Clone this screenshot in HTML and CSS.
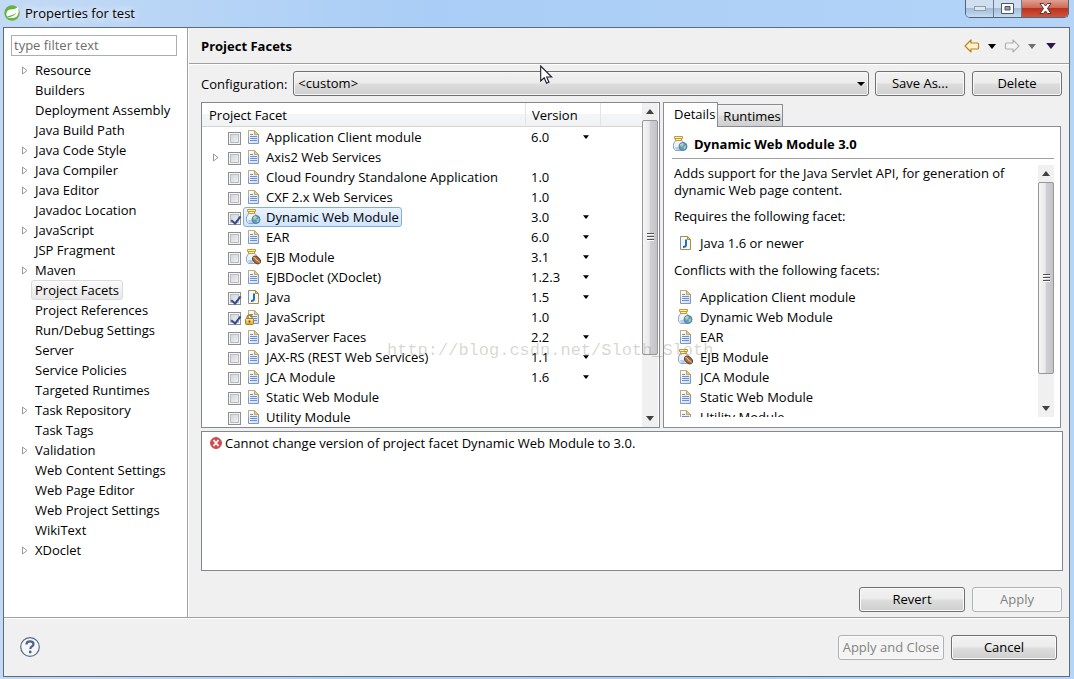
FILE: index.html
```html
<!DOCTYPE html>
<html lang="en">
<head>
<meta charset="utf-8">
<title>Properties for test</title>
<link rel="stylesheet" href="styles.css">
</head>
<body>
<svg class="sprites" aria-hidden="true">
  <defs>
    <linearGradient id="g-page" x1="0" y1="0" x2="1" y2="1"><stop offset="0" stop-color="#ffffff"/><stop offset="1" stop-color="#c9dcf3"/></linearGradient>
    <linearGradient id="g-lock" x1="0" y1="0" x2="0" y2="1"><stop offset="0" stop-color="#ffe9a0"/><stop offset="1" stop-color="#d9a52e"/></linearGradient>
  </defs>
  <symbol id="i-doc" viewBox="0 0 16 16">
    <path d="M3.500 1.500h6l4 4v9h-10z" fill="url(#g-page)" stroke="#8396c0"/>
    <path d="M3.500 8v-6.500h6" fill="none" stroke="#c0ae78"/>
    <path d="M9.500 1.500v4h4z" fill="#e3c984" stroke="#c9a85c"/>
    <path d="M5 5.500h3M5 7.500h7M5 9.500h7M5 11.500h7" stroke="#6f8fc8"/>
  </symbol>
  <symbol id="i-jar" viewBox="0 0 16 16">
    <path d="M3.500 4.500L1.500 8v4l2 2.500h7l2-2.500V8l-2.500-3.500z" fill="#eaf3fb" stroke="#8fa8ca"/>
    <path d="M3 11h5v3H4z" fill="#b5cfe9"/>
    <path d="M2.500.5h8v2h-8zM3.500 2.500h6v2h-6z" fill="#fff2b8" stroke="#c79a2c"/>
  </symbol>
  <symbol id="i-web" viewBox="0 0 16 16">
    <use href="#i-jar"/>
    <circle cx="11" cy="10.500" r="4" fill="#5b9bd2" stroke="#5b7ba8"/>
    <path d="M8 8.500l2.500-1.500 1.500 1-1 2-2 1zM11.500 10.500l2.500-1-.5 3-1.500 1z" fill="#a9d48b"/>
    <path d="M9 8.500l1-1" stroke="#fff"/>
  </symbol>
  <symbol id="i-ejb" viewBox="0 0 16 16">
    <use href="#i-jar"/>
    <ellipse cx="11.500" cy="11" rx="4.500" ry="3" transform="rotate(42 11.500 11)" fill="#a86f47" stroke="#6e3d20"/>
    <path d="M8.500 8.500c2.500 0 2 2.500 3.500 3s1.500.5 2.500 2" fill="none" stroke="#f0d3b4"/>
  </symbol>
  <symbol id="i-java" viewBox="0 0 16 16">
    <path d="M3.500 1.500h7l3 3v10h-10z" fill="#f3f8ff" stroke="#b08d3e"/>
    <path d="M3.500 14V1.500" stroke="#7993b8"/>
    <path d="M10.500 1.500v3h3z" fill="#e3c984" stroke="#b08d3e"/>
    <path d="M9 4.500v5.500c0 1.500-1 2-3 2" fill="none" stroke="#2d6ea6" stroke-width="2"/>
  </symbol>
  <symbol id="i-js" viewBox="0 0 16 16">
    <use href="#i-doc"/>
    <path d="M2 10V8.500a2.500 2.500 0 0 1 5 0V10" fill="none" stroke="#a87b1c" stroke-width="1.300"/>
    <rect x=".5" y="9.500" width="8" height="6" rx="1" fill="url(#g-lock)" stroke="#a87b1c"/>
    <path d="M4.500 11.500v2" stroke="#5c430d" stroke-width="1.500"/>
  </symbol>
  <symbol id="i-tri" viewBox="0 0 6 9"><path d="M.5 1v7L5 4.500z" fill="#fff" stroke="#9a9a9a"/></symbol>
  <symbol id="i-down" viewBox="0 0 8 5"><path d="M0 0h8L4 5z" fill="currentColor"/></symbol>
  <symbol id="i-up" viewBox="0 0 8 5"><path d="M0 5h8L4 0z" fill="currentColor"/></symbol>
  <symbol id="i-arrow" viewBox="0 0 16 14"><path d="M1 7l6-6V4H13.500q1 0 1 1v4q0 1-1 1H7v3z" stroke-width="1.200" stroke-linejoin="round"/></symbol>
</svg>

<div class="window">
  <header class="titlebar">
    <svg class="logo" viewBox="0 0 16 16" aria-hidden="true"><circle cx="8" cy="8" r="7.700" fill="#68b245"/><path d="M14 1.500c1 4 1 8.500-2 10.500-2.500 1.600-6 1-9 .8 4.500-.8 8-2.300 9.500-5.300C10 9.800 6.500 10.300 3 11.500 1.500 8 3 5 6.500 4.500 10 4.200 12.500 4 14 1.500z" fill="#fff"/></svg>
    <h1 class="window-title">Properties for test</h1>
    <div class="window-controls">
      <button class="wc" aria-label="Minimize" disabled><svg width="12" height="5" viewBox="0 0 12 5"><rect x=".5" y=".5" width="11" height="4" fill="#dfe7f0" stroke="#8e9cac"/></svg></button>
      <button class="wc" aria-label="Maximize"><svg width="13" height="11" viewBox="0 0 13 11"><path d="M.5.5h12v10H.5z" fill="#fff" stroke="#4b5663"/><path d="M4 3.500h5v3.500H4z" fill="#8aa0b8" stroke="#4b5663"/></svg></button>
      <button class="wc wc-close" aria-label="Close"><svg width="13" height="11" viewBox="0 0 13 11"><path d="M1 .5h3.500l2 2.500 2-2.500H12L8.500 5.500 12 10.500H8.500l-2-2.500-2 2.500H1l3.500-5z" fill="#fff" stroke="#59313a"/></svg></button>
    </div>
  </header>

  <div class="client">
    <div class="body">
      <nav class="sidebar" aria-label="Property pages">
        <input class="filter" type="text" placeholder="type filter text" aria-label="Filter">
        <ul class="tree">
          <li><svg class="tri"><use href="#i-tri"/></svg><a href="#">Resource</a></li>
          <li><a href="#">Builders</a></li>
          <li><a href="#">Deployment Assembly</a></li>
          <li><a href="#">Java Build Path</a></li>
          <li><svg class="tri"><use href="#i-tri"/></svg><a href="#">Java Code Style</a></li>
          <li><svg class="tri"><use href="#i-tri"/></svg><a href="#">Java Compiler</a></li>
          <li><svg class="tri"><use href="#i-tri"/></svg><a href="#">Java Editor</a></li>
          <li><a href="#">Javadoc Location</a></li>
          <li><svg class="tri"><use href="#i-tri"/></svg><a href="#">JavaScript</a></li>
          <li><a href="#">JSP Fragment</a></li>
          <li><svg class="tri"><use href="#i-tri"/></svg><a href="#">Maven</a></li>
          <li><a class="current" href="#" aria-current="page">Project Facets</a></li>
          <li><a href="#">Project References</a></li>
          <li><a href="#">Run/Debug Settings</a></li>
          <li><a href="#">Server</a></li>
          <li><a href="#">Service Policies</a></li>
          <li><a href="#">Targeted Runtimes</a></li>
          <li><svg class="tri"><use href="#i-tri"/></svg><a href="#">Task Repository</a></li>
          <li><a href="#">Task Tags</a></li>
          <li><svg class="tri"><use href="#i-tri"/></svg><a href="#">Validation</a></li>
          <li><a href="#">Web Content Settings</a></li>
          <li><a href="#">Web Page Editor</a></li>
          <li><a href="#">Web Project Settings</a></li>
          <li><a href="#">WikiText</a></li>
          <li><svg class="tri"><use href="#i-tri"/></svg><a href="#">XDoclet</a></li>
        </ul>
      </nav>

      <main class="page">
        <div class="page-head">
          <h2>Project Facets</h2>
          <div class="history">
            <button class="plain back" aria-label="Back"><svg width="16" height="14"><use href="#i-arrow"/></svg></button>
            <button class="plain" aria-label="Back history"><svg width="8" height="5"><use href="#i-down"/></svg></button>
            <button class="plain forward" aria-label="Forward"><svg width="16" height="14"><use href="#i-arrow"/></svg></button>
            <button class="plain dim" aria-label="Forward history"><svg width="8" height="5"><use href="#i-down"/></svg></button>
            <button class="plain menu" aria-label="Menu"><svg width="10" height="6"><use href="#i-down"/></svg></button>
          </div>
        </div>

        <div class="page-body">
          <div class="config">
            <label for="config">Configuration:</label>
            <div class="combo"><select id="config"><option>&lt;custom&gt;</option></select></div>
            <button class="btn w-s">Save As...</button>
            <button class="btn w-s">Delete</button>
          </div>

          <div class="split">
            <section class="facets">
              <div class="facets-view">
                <table>
                  <colgroup><col><col class="c-version"><col class="c-rest"></colgroup>
                  <thead><tr><th>Project Facet</th><th>Version</th><th></th></tr></thead>
                  <tbody>
                    <tr><td><div class="cell"><input type="checkbox" id="f1"><label for="f1"><svg class="ico"><use href="#i-doc"/></svg>Application Client module</label></div></td><td><div class="ver">6.0<button class="plain" aria-label="Choose version"><svg width="6" height="4"><use href="#i-down"/></svg></button></div></td><td></td></tr>
                    <tr><td><div class="cell"><svg class="tri"><use href="#i-tri"/></svg><input type="checkbox" id="f2"><label for="f2"><svg class="ico"><use href="#i-doc"/></svg>Axis2 Web Services</label></div></td><td></td><td></td></tr>
                    <tr><td><div class="cell"><input type="checkbox" id="f3"><label for="f3"><svg class="ico"><use href="#i-doc"/></svg>Cloud Foundry Standalone Application</label></div></td><td><div class="ver">1.0</div></td><td></td></tr>
                    <tr><td><div class="cell"><input type="checkbox" id="f4"><label for="f4"><svg class="ico"><use href="#i-doc"/></svg>CXF 2.x Web Services</label></div></td><td><div class="ver">1.0</div></td><td></td></tr>
                    <tr><td><div class="cell"><input type="checkbox" id="f5" checked><label class="selected" for="f5"><svg class="ico"><use href="#i-web"/></svg>Dynamic Web Module</label></div></td><td><div class="ver">3.0<button class="plain" aria-label="Choose version"><svg width="6" height="4"><use href="#i-down"/></svg></button></div></td><td></td></tr>
                    <tr><td><div class="cell"><input type="checkbox" id="f6"><label for="f6"><svg class="ico"><use href="#i-doc"/></svg>EAR</label></div></td><td><div class="ver">6.0<button class="plain" aria-label="Choose version"><svg width="6" height="4"><use href="#i-down"/></svg></button></div></td><td></td></tr>
                    <tr><td><div class="cell"><input type="checkbox" id="f7"><label for="f7"><svg class="ico"><use href="#i-ejb"/></svg>EJB Module</label></div></td><td><div class="ver">3.1<button class="plain" aria-label="Choose version"><svg width="6" height="4"><use href="#i-down"/></svg></button></div></td><td></td></tr>
                    <tr><td><div class="cell"><input type="checkbox" id="f8"><label for="f8"><svg class="ico"><use href="#i-doc"/></svg>EJBDoclet (XDoclet)</label></div></td><td><div class="ver">1.2.3<button class="plain" aria-label="Choose version"><svg width="6" height="4"><use href="#i-down"/></svg></button></div></td><td></td></tr>
                    <tr><td><div class="cell"><input type="checkbox" id="f9" checked><label for="f9"><svg class="ico"><use href="#i-java"/></svg>Java</label></div></td><td><div class="ver">1.5<button class="plain" aria-label="Choose version"><svg width="6" height="4"><use href="#i-down"/></svg></button></div></td><td></td></tr>
                    <tr><td><div class="cell"><input type="checkbox" id="f10" checked><label for="f10"><svg class="ico"><use href="#i-js"/></svg>JavaScript</label></div></td><td><div class="ver">1.0</div></td><td></td></tr>
                    <tr><td><div class="cell"><input type="checkbox" id="f11"><label for="f11"><svg class="ico"><use href="#i-doc"/></svg>JavaServer Faces</label></div></td><td><div class="ver">2.2<button class="plain" aria-label="Choose version"><svg width="6" height="4"><use href="#i-down"/></svg></button></div></td><td></td></tr>
                    <tr><td><div class="cell"><input type="checkbox" id="f12"><label for="f12"><svg class="ico"><use href="#i-doc"/></svg>JAX-RS (REST Web Services)</label></div></td><td><div class="ver">1.1<button class="plain" aria-label="Choose version"><svg width="6" height="4"><use href="#i-down"/></svg></button></div></td><td></td></tr>
                    <tr><td><div class="cell"><input type="checkbox" id="f13"><label for="f13"><svg class="ico"><use href="#i-doc"/></svg>JCA Module</label></div></td><td><div class="ver">1.6<button class="plain" aria-label="Choose version"><svg width="6" height="4"><use href="#i-down"/></svg></button></div></td><td></td></tr>
                    <tr><td><div class="cell"><input type="checkbox" id="f14"><label for="f14"><svg class="ico"><use href="#i-doc"/></svg>Static Web Module</label></div></td><td></td><td></td></tr>
                    <tr><td><div class="cell"><input type="checkbox" id="f15"><label for="f15"><svg class="ico"><use href="#i-doc"/></svg>Utility Module</label></div></td><td></td><td></td></tr>
                  </tbody>
                </table>
              </div>
              <div class="scroll" aria-hidden="true">
                <svg class="cap"><use href="#i-up"/></svg>
                <div class="track"><div class="thumb thumb-facets"><i></i></div></div>
                <svg class="cap"><use href="#i-down"/></svg>
              </div>
            </section>

            <section class="details">
              <div class="tabs" role="tablist">
                <button class="tab active" role="tab" aria-selected="true">Details</button>
                <button class="tab" role="tab" aria-selected="false">Runtimes</button>
              </div>
              <div class="panel" role="tabpanel">
                <h3><svg class="ico"><use href="#i-web"/></svg>Dynamic Web Module 3.0</h3>
                <div class="panel-body">
                  <div class="panel-text">
                    <p>Adds support for the Java Servlet API, for generation of dynamic Web page content.</p>
                    <p>Requires the following facet:</p>
                    <ul class="facet-list">
                      <li><svg class="ico"><use href="#i-java"/></svg>Java 1.6 or newer</li>
                    </ul>
                    <p>Conflicts with the following facets:</p>
                    <ul class="facet-list">
                      <li><svg class="ico"><use href="#i-doc"/></svg>Application Client module</li>
                      <li><svg class="ico"><use href="#i-web"/></svg>Dynamic Web Module</li>
                      <li><svg class="ico"><use href="#i-doc"/></svg>EAR</li>
                      <li><svg class="ico"><use href="#i-ejb"/></svg>EJB Module</li>
                      <li><svg class="ico"><use href="#i-doc"/></svg>JCA Module</li>
                      <li><svg class="ico"><use href="#i-doc"/></svg>Static Web Module</li>
                      <li><svg class="ico"><use href="#i-doc"/></svg>Utility Module</li>
                    </ul>
                  </div>
                  <div class="scroll" aria-hidden="true">
                    <svg class="cap"><use href="#i-up"/></svg>
                    <div class="track"><div class="thumb thumb-details"><i></i></div></div>
                    <svg class="cap"><use href="#i-down"/></svg>
                  </div>
                </div>
              </div>
            </section>
          </div>

          <section class="messages">
            <p><svg width="12" height="12" viewBox="0 0 12 12" aria-hidden="true"><circle cx="6" cy="6" r="5.500" fill="#d9474c" stroke="#c2565b"/><path d="M3.500 3l5 6M8.500 3l-5 6" stroke="#fff" stroke-width="1.800"/></svg>Cannot change version of project facet Dynamic Web Module to 3.0.</p>
          </section>

          <div class="actions">
            <button class="btn w-m">Revert</button>
            <button class="btn w-s" disabled>Apply</button>
          </div>
        </div>
      </main>
    </div>

    <footer class="footer">
      <button class="plain help" aria-label="Help"><svg width="20" height="20" viewBox="0 0 20 20"><circle cx="10" cy="10" r="9.300" fill="#f4f6f9" stroke="#566b8b" stroke-width="1.200"/><path d="M6.500 7.500C6.500 5 8 4.300 10 4.300s3.500 1 3.500 2.900c0 2.300-3.200 2.300-3.200 4.800" fill="none" stroke="#4c6285" stroke-width="2.200"/><circle cx="10.200" cy="15" r="1.400" fill="#4c6285"/></svg></button>
      <div class="footer-buttons">
        <button class="btn w-m" disabled>Apply and Close</button>
        <button class="btn w-m">Cancel</button>
      </div>
    </footer>
  </div>

  <div class="watermark">http://blog.csdn.net/Sloth_Sloth</div>
  <svg class="cursor" width="13" height="20" viewBox="0 0 13 20" aria-hidden="true"><path d="M.7 1v15l3.500-3.200 2.300 5.500 2.500-1-2.300-5.300h5z" fill="#fff" stroke="#1c1c2c" stroke-width="1.100"/></svg>
</div>
</body>
</html>
```
FILE: styles.css
```css
* { box-sizing: border-box; }

body {
  margin: 0;
  font: 13px/20px "Open Sans", "Noto Sans", sans-serif;
  color: #000;
}

h1, h2, h3, p, ul { margin: 0; padding: 0; }
ul { list-style: none; }
button, input, select { font: inherit; color: inherit; }
a { color: inherit; text-decoration: none; }
svg { flex: none; display: block; }

.sprites { position: absolute; width: 0; height: 0; }

.window {
  position: relative;
  display: flex;
  flex-direction: column;
  min-height: 100vh;
  padding: 0 4px 2px 3px;
  background: linear-gradient(90deg, #c3daf5 0, #a9cdf6 40%, #b4d4f8 100%);
}

/* Title bar */
.titlebar {
  display: flex;
  align-items: center;
  gap: 5px;
  height: 27px;
  padding: 0 1px 2px;
}
.logo { width: 16px; height: 16px; }
.window-title {
  flex: 1;
  font-size: 13px;
  font-weight: 400;
  text-shadow: 0 0 8px #fff, 0 0 12px #fff;
}
.window-controls {
  display: flex;
  align-self: flex-start;
  height: 18px;
  border: 1px solid #56657a;
  border-top: 0;
  border-radius: 0 0 5px 5px;
  overflow: hidden;
}
.wc {
  display: grid;
  place-items: center;
  width: 28px;
  padding: 0 0 1px;
  border: 0;
  border-right: 1px solid #6b7d94;
  background: linear-gradient(#cfdff0 45%, #a5bdd8 50%, #c4dbf3);
}
.wc-close {
  width: 46px;
  border-right: 0;
  background: linear-gradient(#dfa092 0, #d06a57 45%, #b8321f 50%, #d1553c);
}

/* Dialog area */
.client {
  flex: 1;
  display: flex;
  flex-direction: column;
  border: 1px solid #5d6b7b;
  background: #f0f0f0;
}
.body { flex: 1; display: flex; border-bottom: 1px solid #a0a0a0; }

.sidebar {
  flex: none;
  width: 184px;
  padding: 7px 10px 7px 7px;
  border-right: 1px solid #a0a0a0;
  background: #fff;
}
.filter {
  display: block;
  width: 100%;
  height: 21px;
  padding: 0 2px 1px;
  border: 1px solid #abadb3;
  background: #fff;
}
.filter::placeholder { color: #6d6d6d; opacity: 1; }
.tree { padding-top: 4px; }
.tree li {
  display: grid;
  grid-template-columns: 20px auto;
  justify-content: start;
  align-items: center;
  height: 20px;
}
.tree a {
  grid-column: 2;
  padding: 0 3px;
  border: 1px solid transparent;
  line-height: 18px;
  white-space: nowrap;
}
.tree .current {
  border-color: #dadada;
  border-radius: 3px;
  background: linear-gradient(#fafafa, #e8e8e8);
}
.tri { width: 6px; height: 9px; }
.tree .tri { grid-row: 1; margin-left: 11px; }

/* Property page */
.page { flex: 1; min-width: 0; display: flex; flex-direction: column; border-left: 1px solid #fff; }
.page-head {
  display: flex;
  align-items: center;
  justify-content: space-between;
  height: 36px;
  padding: 1px 13px 0 12px;
  border-bottom: 1px solid #a0a0a0;
}
.page-head h2 { font-size: 13px; font-weight: 700; }
.history { display: flex; align-items: center; gap: 8px; }
.plain {
  display: grid;
  place-items: center;
  padding: 0;
  border: 0;
  background: none;
}
.back { fill: #fff3c8; stroke: #bb8420; }
.forward { fill: #f4f4f4; stroke: #b0b0b0; transform: scaleX(-1); }
.dim { color: #707070; }
.menu { color: #2b1650; margin-left: 2px; }

.page-body {
  flex: 1;
  display: flex;
  flex-direction: column;
  padding: 6px 6px 5px 12px;
  border-top: 1px solid #fff;
}
.config { display: flex; align-items: center; gap: 6px; padding-right: 1px; }
.config label { line-height: 18px; }
.config .btn + .btn { margin-left: 1px; }
.combo { position: relative; flex: 1; }
.combo select {
  display: block;
  width: 100%;
  height: 25px;
  padding: 0 4px 1px;
  border: 1px solid #707070;
  border-radius: 3px;
  background: linear-gradient(#f2f2f2, #ebebeb 48%, #dddddd 52%, #cfcfcf);
  box-shadow: inset 0 0 0 1px #f8f8f8;
  appearance: none;
}
.combo::after {
  content: "";
  position: absolute;
  right: 4px;
  top: 11px;
  border: 4px solid transparent;
  border-top-color: #000;
  border-bottom: 0;
  pointer-events: none;
}

.btn {
  height: 25px;
  padding: 0 0 1px;
  border: 1px solid #707070;
  border-radius: 3px;
  background: linear-gradient(#f2f2f2, #ebebeb 48%, #dddddd 52%, #cfcfcf);
  box-shadow: inset 0 0 0 1px #fafafa;
  line-height: 20px;
  white-space: nowrap;
}
.btn:disabled { border-color: #adb2b5; background: #f4f4f4; color: #838383; }
.w-s { width: 90px; }
.w-m { width: 106px; }

.split {
  flex: 325 0 325px;
  display: grid;
  grid-template-columns: 459fr 398fr;
  gap: 3px;
  margin-top: 6px;
  padding-right: 2px;
}

.facets { display: flex; min-width: 0; padding-right: 1px; border: 1px solid #828790; background: #fff; }
.facets-view { flex: 1; min-width: 0; height: 0; min-height: 100%; overflow: hidden; }
.facets table { width: 100%; border-spacing: 0; table-layout: fixed; }
.c-version { width: 75px; }
.c-rest { width: 41px; }
.facets th {
  height: 24px;
  padding: 0 0 0 6px;
  border-right: 1px solid #e2e4e7;
  border-bottom: 1px solid #d5d5d5;
  background: linear-gradient(#fff 45%, #f4f5f7 50%, #f1f2f4);
  font-weight: 400;
  text-align: left;
}
.facets th:first-child { padding-left: 7px; }
.facets th:last-child { border-right: 0; }
.facets td { height: 20px; padding: 0; }
.cell {
  display: grid;
  grid-template-columns: 26px 15px auto;
  justify-content: start;
  align-items: center;
  height: 20px;
}
.cell .tri { grid-row: 1; margin-left: 11px; }
.cell input {
  grid-column: 2;
  appearance: none;
  width: 13px;
  height: 13px;
  margin: 2px 0 0;
  border: 1px solid #8e8f8f;
  background: linear-gradient(135deg, #cdd0d5, #f6f6f6);
  box-shadow: inset 0 0 0 1px #f4f4f4, inset 0 0 0 2px #b9bdc4;
}
.cell input:checked::after {
  content: "";
  display: block;
  width: 4px;
  height: 8px;
  margin: 1px 0 0 4px;
  border: solid #34498e;
  border-width: 0 2px 2px 0;
  transform: rotate(38deg);
}
.cell input:checked { display: grid; align-content: start; }
.cell label {
  display: flex;
  align-items: center;
  gap: 5px;
  height: 20px;
  padding: 0 2px 0 1px;
  border: 1px solid transparent;
  white-space: nowrap;
}
.cell .selected {
  border-color: #84acdd;
  border-radius: 3px;
  background: linear-gradient(#ebf4fe, #cfe4fe);
}
.ico { width: 16px; height: 16px; }
.ver {
  display: grid;
  grid-template-columns: 52px auto;
  justify-content: start;
  align-items: center;
  padding-left: 5px;
}

/* Scroll bars */
.scroll {
  display: flex;
  flex-direction: column;
  flex: none;
  width: 16px;
  background: #f0f0f0;
}
.cap { width: 16px; height: 17px; padding: 6px 4px; color: #404040; }
.track { flex: 1; }
.thumb {
  display: grid;
  place-items: center;
  border: 1px solid #979797;
  border-radius: 2px;
  background: linear-gradient(90deg, #f5f5f5, #e9e9eb 45%, #d0d0d4 50%, #c4c4c8);
}
.thumb-facets { height: 81%; }
.thumb-details { height: 88%; }
.thumb i {
  width: 7px;
  height: 8px;
  background: repeating-linear-gradient(#505050 0 1px, #fff 1px 2px, transparent 2px 3px);
}

/* Details */
.details { display: flex; flex-direction: column; min-width: 0; }
.tabs { display: flex; align-items: flex-end; height: 24px; }
.tab {
  height: 22px;
  padding: 0 1px 0 5px;
  border: 1px solid #898c95;
  border-left: 0;
  border-bottom: 0;
  background: linear-gradient(#f2f2f2, #ebebeb 48%, #dddddd 52%, #cfcfcf);
  line-height: 18px;
}
.tab.active {
  position: relative;
  height: 25px;
  margin-bottom: -1px;
  padding: 0 2px 3px 10px;
  border-left: 1px solid #898c95;
  background: #fff;
}
.panel {
  flex: 1;
  display: flex;
  flex-direction: column;
  padding: 7px 6px 10px 8px;
  border: 1px solid #898c95;
  background: #fff;
}
.panel h3 {
  display: flex;
  align-items: center;
  gap: 6px;
  height: 25px;
  padding-bottom: 4px;
  border-bottom: 1px solid #a0a0a0;
  font-size: 13px;
  font-weight: 700;
}
.panel-body { flex: 1; display: flex; margin-top: 6px; }
.panel-text {
  flex: 1;
  display: flex;
  flex-direction: column;
  gap: 9px;
  height: 0;
  min-height: 100%;
  padding: 0 24px 0 2px;
  overflow: hidden;
  line-height: 17px;
}
.panel-text > * { flex: none; }
.panel-text > ul { margin-top: -1px; }
.facet-list { padding-left: 3px; }
.facet-list li { display: flex; align-items: center; gap: 7px; height: 20px; }

/* Messages and actions */
.messages {
  flex: 140 0 140px;
  margin-top: 3px;
  padding: 1px 8px;
  border: 1px solid #828790;
  background: #fff;
}
.messages p { display: flex; align-items: center; gap: 3px; }
.actions { display: flex; justify-content: flex-end; gap: 7px; margin-top: 16px; padding-right: 1px; }

.footer {
  display: flex;
  align-items: center;
  justify-content: space-between;
  height: 58px;
  padding: 0 12px 1px 16px;
  border-top: 1px solid #fff;
}
.footer-buttons { display: flex; gap: 7px; }

/* Overlays */
.watermark {
  position: absolute;
  left: 387px;
  top: 341px;
  font: 17px/20px "Liberation Mono", monospace;
  color: rgba(110, 110, 90, 0.28);
  pointer-events: none;
}
.cursor { position: absolute; left: 540px; top: 65px; pointer-events: none; }
```
